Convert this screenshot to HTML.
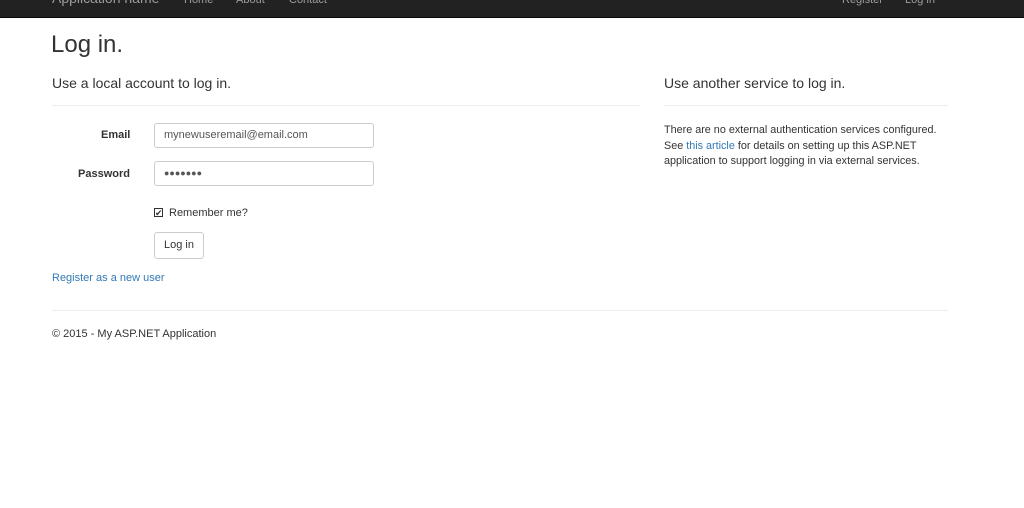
<!DOCTYPE html>
<html><head><style>
body{margin:0;width:1024px;height:508px;background:#fff;font-family:"Liberation Sans",sans-serif;color:#333;position:relative;overflow:hidden;font-size:11px}
.a{position:absolute;white-space:nowrap}
.nav{position:absolute;left:0;top:0;width:1024px;height:17px;background:#222;border-bottom:1px solid #080808}
.nav span{position:absolute;top:-6px;color:#9d9d9d;font-size:11px}
hr{position:absolute;margin:0;border:0;border-top:1px solid #eee;height:0}
.inp{position:absolute;border:1px solid #ccc;border-radius:3px;height:25px;box-sizing:border-box;width:220px;left:154px;padding:0 9px;line-height:23px;font-size:11px;color:#555}
a{color:#337ab7;text-decoration:none}
</style></head><body>
<div class="nav"><span style="left:52px;font-size:14px;top:-10px">Application name</span><span style="left:184px">Home</span><span style="left:236px">About</span><span style="left:289px">Contact</span><span style="left:842px">Register</span><span style="left:905px">Log in</span></div>
<div class="a" style="left:51px;top:31px;font-size:24px;color:#333">Log in.</div>
<div class="a" style="left:52px;top:75px;font-size:14px">Use a local account to log in.</div>
<hr style="left:52px;top:105px;width:588px">
<div class="a" style="left:101px;top:129px;font-weight:bold">Email</div>
<div class="inp" style="top:123px">mynewuseremail@email.com</div>
<div class="a" style="left:78px;top:168px;font-weight:bold">Password</div>
<div class="inp" style="top:161px;font-size:9px;letter-spacing:0px">●●●●●●●</div>
<div class="a" style="left:154px;top:208px;width:9px;height:9px;border:1px solid #333;box-sizing:border-box;font-size:9px;line-height:8px;text-align:center">✔</div>
<div class="a" style="left:169px;top:207px">Remember me?</div>
<div class="a" style="left:154px;top:232px;width:50px;height:27px;border:1px solid #ccc;border-radius:3px;box-sizing:border-box;text-align:center;line-height:25px">Log in</div>
<div class="a" style="left:52px;top:272px"><a>Register as a new user</a></div>
<div class="a" style="left:664px;top:75px;font-size:14px">Use another service to log in.</div>
<hr style="left:664px;top:105px;width:284px">
<div class="a" style="left:664px;top:123px;line-height:15.5px;font-size:10.8px">There are no external authentication services configured.<br>See <a>this article</a> for details on setting up this ASP.NET<br>application to support logging in via external services.</div>
<hr style="left:52px;top:310px;width:896px">
<div class="a" style="left:52px;top:328px">© 2015 - My ASP.NET Application</div>
</body></html>
